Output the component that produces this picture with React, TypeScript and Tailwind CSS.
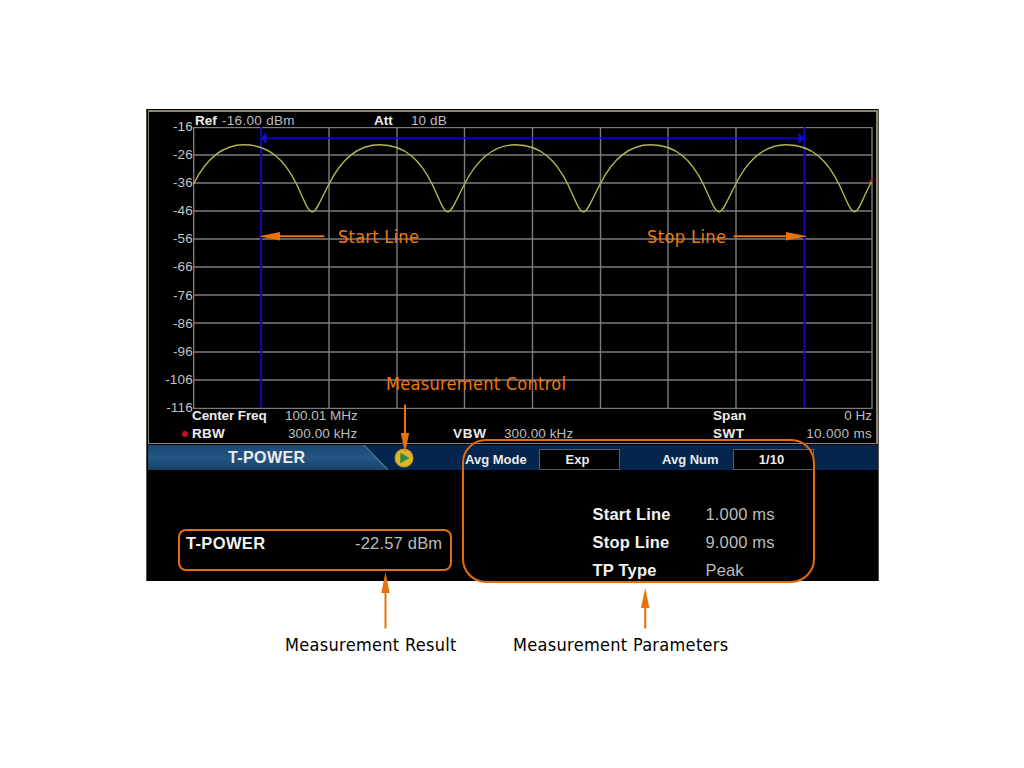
import type { ReactNode } from "react";

const levels = [-16, -26, -36, -46, -56, -66, -76, -86, -96, -106, -116];
const columns = [136, 204, 271.5, 339.5, 407.5, 475, 543];
const rows = [28, 56, 84, 112, 140, 168, 196, 225, 253];

const PERIOD = 135.6;

function tracePath() {
  let d = "M0.5 57";
  for (let i = 0; i < 5; i++) {
    const x = i * PERIOD;
    d += ` C${x + 11} 36 ${x + 26} 17.8 ${x + 51} 17.8`;
    d += ` C${x + 77} 17.8 ${x + 92} 34 ${x + 103.5} 57`;
    d += ` C${x + 112} 75 ${x + 115} 84.8 ${x + 119.3} 84.8`;
    if (i < 4) d += ` C${x + 123.5} 84.8 ${x + 127} 74 ${x + 136} 57`;
  }
  return d + " C666 84.8 669 72 679 54";
}

function Plot() {
  return (
    <svg width="680" height="282" viewBox="0 0 680 282" fill="none">
      <g stroke="#7c7c7c" strokeWidth="1.4">
        <rect x="0.7" y="0.5" width="678.3" height="281" />
        {columns.map((x) => (
          <path key={x} d={`M${x} 0V282`} />
        ))}
        {rows.map((y) => (
          <path key={y} d={`M0 ${y}H679`} />
        ))}
      </g>
      <g stroke="#1308b8" strokeWidth="2">
        <path d="M68.2 0V281M611.5 0V281" />
        <path d="M70 11.2H610" strokeWidth="1.6" />
      </g>
      <path d="M69 11.2l4-5v10zM611 11.2l-5-4.5v9z" fill="#0d0de0" stroke="#0d0de0" />
      <path d={tracePath()} stroke="#b4b84c" strokeWidth="1.4" />
      <path d="M676 54h3.5v-3" stroke="#a81818" strokeWidth="1.5" />
    </svg>
  );
}

interface ParamProps {
  label: string;
  value: string;
}

function Param({ label, value }: ParamProps) {
  return (
    <div className="flex h-7 items-center text-[16.5px]">
      <span className="w-[113px] font-bold tracking-[0.2px] text-[#f2f2f2]">
        {label}
      </span>
      <span className="tracking-[0.15px] text-[#bcbcbc]">{value}</span>
    </div>
  );
}

function ValueBox({ children }: { children: ReactNode }) {
  return (
    <div className="flex h-[21px] w-[81px] items-center justify-center border border-[#53616c] bg-black pr-1">
      {children}
    </div>
  );
}

function Callouts() {
  return (
    <>
      <div className="absolute left-[178px] top-[529px] h-[42px] w-[274px] rounded-[8px] border-2 border-[#e46c0a]" />
      <div className="absolute left-[462px] top-[439px] h-[144px] w-[353px] rounded-[24px] border-2 border-[#e46c0a]" />
      <svg
        className="absolute left-0 top-0"
        width="1024"
        height="768"
        fill="#e8710a"
        stroke="#e8710a"
      >
        <g strokeWidth="2">
          <path d="M278 236.3H324.5M733.5 236.3H788M405 404.5V434M385.5 590V628.5M645.2 607V628.5" />
        </g>
        <g stroke="none">
          <path d="M259 236.3L280 232v8.6zM807.5 236.3L786 232v8.6zM405 453L400.8 433h8.4zM385.5 572L381.3 593h8.4zM645.2 588L641 608h8.4z" />
        </g>
      </svg>
      <div className="absolute left-[338px] top-[225px] text-[18px] leading-6 tracking-[0.27px] whitespace-nowrap text-[#ef7a0e]">
        Start Line
      </div>
      <div className="absolute left-[647px] top-[225px] text-[18px] leading-6 tracking-[0.4px] whitespace-nowrap text-[#ef7a0e]">
        Stop Line
      </div>
      <div className="absolute left-[386px] top-[372px] text-[18px] leading-6 tracking-[0.29px] whitespace-nowrap text-[#ef7a0e]">
        Measurement Control
      </div>
      <div className="absolute left-[285px] top-[633px] text-[18px] leading-6 tracking-[0.3px] whitespace-nowrap text-black">
        Measurement Result
      </div>
      <div className="absolute left-[513px] top-[633px] text-[18px] leading-6 tracking-[0.3px] whitespace-nowrap text-black">
        Measurement Parameters
      </div>
    </>
  );
}

export default function App() {
  return (
    <div className="relative h-[768px] w-[1024px] overflow-hidden bg-white pl-[146px] pt-[109px] font-['DejaVu_Sans_Condensed','DejaVu_Sans',sans-serif]">
      <div className="flex h-[472px] w-[733px] flex-col border-r border-l border-[#55524e] bg-black pl-px font-['Liberation_Sans',sans-serif]">
        <section className="mt-px flex h-[335px] flex-col border-2 border-b-[1.5px] border-l-[1.5px] border-[#8b857a] text-[13.5px]">
          <div className="flex h-[15px] items-center pl-[46px] pt-px leading-[15px]">
            <span className="w-[27px] font-bold text-[#ececec]">Ref</span>
            <span className="w-[152px] tracking-[0.3px] text-[#bdbdbd]">
              -16.00 dBm
            </span>
            <span className="w-[37px] font-bold text-[#ececec]">Att</span>
            <span className="tracking-[0.1px] text-[#bdbdbd]">10 dB</span>
          </div>

          <div className="flex h-[281px]">
            <div className="-mt-[14px] flex w-[44px] shrink-0 flex-col items-end">
              {levels.map((l) => (
                <span
                  key={l}
                  className="h-[28.1px] shrink-0 leading-[28px] tracking-[0.2px] text-[#c4c4c4]"
                >
                  {l}
                </span>
              ))}
            </div>
            <div className="w-[680px] shrink-0">
              <Plot />
            </div>
          </div>

          <div className="flex h-[17px] items-center pb-[2px] pl-[43px] leading-4">
            <span className="w-[93px] font-bold tracking-[-0.1px] text-[#ececec]">
              Center Freq
            </span>
            <span className="w-[428px] text-[#bdbdbd]">100.01 MHz</span>
            <span className="w-[79px] font-bold tracking-[0.1px] text-[#ececec]">
              Span
            </span>
            <span className="w-[80px] text-right text-[#bdbdbd]">0 Hz</span>
          </div>
          <div className="flex h-[18px] items-center pl-[33px] leading-4">
            <span className="mr-[4px] h-[6px] w-[6px] rounded-full bg-[#c41020]" />
            <span className="w-[96px] font-bold tracking-[0.3px] text-[#ececec]">
              RBW
            </span>
            <span className="w-[165px] tracking-[0.1px] text-[#bdbdbd]">
              300.00 kHz
            </span>
            <span className="w-[51px] font-bold tracking-[0.8px] text-[#ececec]">
              VBW
            </span>
            <span className="w-[209px] tracking-[0.1px] text-[#bdbdbd]">
              300.00 kHz
            </span>
            <span className="w-[79px] font-bold tracking-[0.5px] text-[#ececec]">
              SWT
            </span>
            <span className="w-[80px] text-right tracking-[0.3px] text-[#bdbdbd]">
              10.000 ms
            </span>
          </div>
        </section>

        <div className="mt-px flex h-[25px] items-center bg-[#03254e] pr-[65px] text-[13px] font-bold text-[#ececec]">
          <div className="relative h-[25px] w-[240px] shrink-0">
            <svg className="absolute" width="240" height="25">
              <defs>
                <linearGradient id="tab" x1="0" y1="0" x2="0" y2="1">
                  <stop offset="0" stopColor="#1b4874" />
                  <stop offset="0.5" stopColor="#245583" />
                  <stop offset="1" stopColor="#174269" />
                </linearGradient>
              </defs>
              <path d="M0 0H216L240 25H0z" fill="url(#tab)" />
              <path d="M216 0L240 25" stroke="#47749a" strokeWidth="1.3" />
            </svg>
            <span className="relative ml-[80px] text-[16px] leading-[25px] tracking-[0.4px]">
              T-POWER
            </span>
          </div>
          <svg className="ml-[6px] mt-px shrink-0" width="20" height="20">
            <circle cx="10" cy="10" r="9.5" fill="#c99a1c" />
            <circle cx="10" cy="10" r="8.2" fill="#e0b52a" />
            <path
              d="M6.5 5L15 10L6.5 15z"
              fill="#159447"
              stroke="#6b8a2a"
              strokeWidth="0.8"
            />
          </svg>
          <div className="flex items-center pt-[4px]">
            <span className="ml-[51px] w-[74px]">Avg Mode</span>
            <ValueBox>Exp</ValueBox>
            <span className="ml-[42px] w-[71px]">Avg Num</span>
            <ValueBox>1/10</ValueBox>
          </div>
        </div>

        <div className="flex flex-1 pt-[31px]">
          <div className="flex w-[444.5px] pl-[38px] pt-7 text-[16.5px] leading-[29px]">
            <span className="w-[169px] font-bold tracking-[0.35px] text-[#f2f2f2]">
              T-POWER
            </span>
            <span className="tracking-[0.2px] text-[#bcbcbc]">-22.57 dBm</span>
          </div>
          <div className="-mt-px">
            <Param label="Start Line" value="1.000 ms" />
            <Param label="Stop Line" value="9.000 ms" />
            <Param label="TP Type" value="Peak" />
          </div>
        </div>
      </div>
      <Callouts />
    </div>
  );
}
